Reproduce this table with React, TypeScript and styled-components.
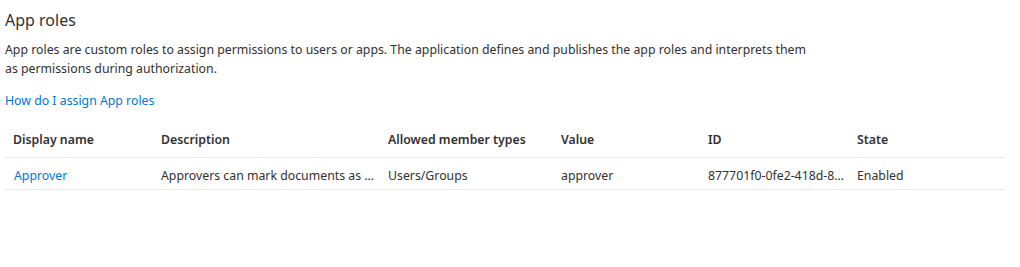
import styled, { createGlobalStyle } from 'styled-components'

const GlobalStyle = createGlobalStyle`
  body {
    margin: 0;
    background: #ffffff;
    color: #323130;
    font-family: 'Noto Sans', 'Open Sans', sans-serif;
  }
`

const Section = styled.section`
  padding: 9px 15px 0 5px;
`

const Title = styled.h2`
  font-size: 16px;
  font-weight: 400;
  line-height: 22px;
  margin: 0 0 9px;
`

const Intro = styled.p`
  font-size: 12.3px;
  line-height: 19px;
  margin: 0 0 10px;
  max-width: 808px;
`

const HelpLink = styled.a`
  color: #0078d4;
  display: inline-block;
  font-size: 12.3px;
  line-height: 19px;
  margin-bottom: 12px;
  text-decoration: none;
`

const Table = styled.table`
  border-collapse: collapse;
  table-layout: fixed;
  width: 1000px;
  font-size: 12.3px;
`

const HeadCell = styled.th`
  border-bottom: 1px solid #edebe9;
  font-weight: 600;
  height: 35px;
  padding: 0 8px;
  text-align: left;
`

const Cell = styled.td<{ $link?: boolean }>`
  border-bottom: 1px solid #edebe9;
  color: ${(props) => (props.$link ? '#0078d4' : '#323130')};
  height: 28px;
  overflow: hidden;
  padding: 3px 4px 0 8px;
  padding-left: ${(props) => (props.$link ? '9px' : '8px')};
  text-overflow: ellipsis;
  white-space: nowrap;
`

const columns = [
  { label: 'Display name', width: 148 },
  { label: 'Description', width: 227 },
  { label: 'Allowed member types', width: 173 },
  { label: 'Value', width: 147 },
  { label: 'ID', width: 149 },
  { label: 'State', width: 156 },
]

const roles = [
  {
    name: 'Approver',
    description: 'Approvers can mark documents as approved',
    members: 'Users/Groups',
    value: 'approver',
    id: '877701f0-0fe2-418d-8f3c-2b1a6c9d0e45',
    state: 'Enabled',
  },
]

export default function App() {
  return (
    <>
      <GlobalStyle />
      <Section>
        <Title>App roles</Title>
        <Intro>
          App roles are custom roles to assign permissions to users or apps. The application defines and
          publishes the app roles and interprets them as permissions during authorization.
        </Intro>
        <HelpLink href="#">How do I assign App roles</HelpLink>
        <Table>
          <colgroup>
            {columns.map((col) => (
              <col key={col.label} style={{ width: col.width }} />
            ))}
          </colgroup>
          <thead>
            <tr>
              {columns.map((col) => (
                <HeadCell key={col.label}>{col.label}</HeadCell>
              ))}
            </tr>
          </thead>
          <tbody>
            {roles.map((role) => (
              <tr key={role.id}>
                <Cell $link>{role.name}</Cell>
                <Cell>{role.description}</Cell>
                <Cell>{role.members}</Cell>
                <Cell>{role.value}</Cell>
                <Cell>{role.id}</Cell>
                <Cell>{role.state}</Cell>
              </tr>
            ))}
          </tbody>
        </Table>
      </Section>
    </>
  )
}
